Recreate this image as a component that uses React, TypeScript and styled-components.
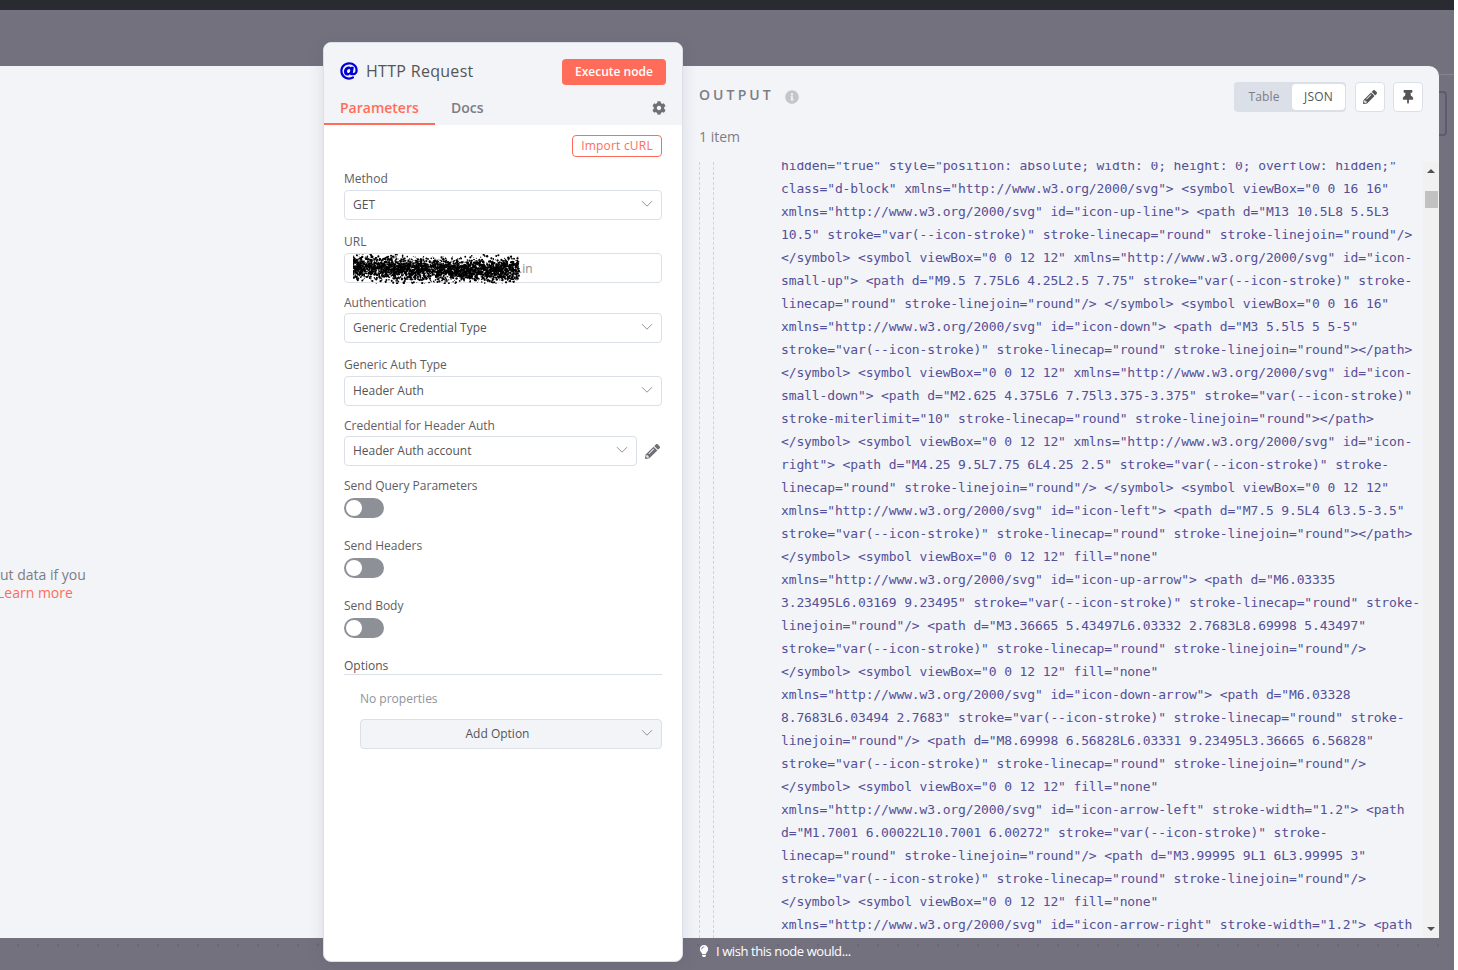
import React from 'react'
import styled, { createGlobalStyle } from 'styled-components'
import { FaAt, FaCog, FaInfoCircle, FaLightbulb, FaPencilAlt, FaThumbtack } from 'react-icons/fa'

const GlobalStyle = createGlobalStyle`
  html, body {
    margin: 0;
    background: #fff;
    font-family: 'Open Sans', 'Liberation Sans', sans-serif;
  }
`

const dots = `radial-gradient(circle at 1px 1px, #68667a 1px, transparent 1.5px)`

const Page = styled.div`
  width: 1454px;
  height: 970px;
  display: flex;
  flex-direction: column;
  overflow: hidden;
  background: #74717f;
`

const TopBar = styled.div`
  height: 10px;
  background: #2a2b30;
  flex: none;
`

const Stage = styled.div`
  flex: 1;
  min-height: 0;
  display: flex;
  padding: 32px 0 8px;
`

const LeftColumn = styled.div`
  width: 323px;
  flex: none;
  display: flex;
  flex-direction: column;
  padding-top: 24px;
`

const InputPanel = styled.div`
  height: 872px;
  flex: none;
  background: #f2f4f8;
  overflow: hidden;
  padding-top: 500px;
  box-sizing: border-box;
  font-size: 14px;
  line-height: 18px;
  color: #7d7d85;
  white-space: nowrap;
`

const LearnMore = styled.div`
  color: #ff6d5a;
  margin-left: -3px;
`

const DotStrip = styled.div<{ $x: number }>`
  flex: 1;
  background-image: ${dots};
  background-size: 20px 20px;
  background-position: ${(p) => p.$x}px 6px;
`

const NodePanel = styled.div`
  width: 360px;
  flex: none;
  box-sizing: border-box;
  display: flex;
  flex-direction: column;
  background: #fff;
  border: 1px solid #dbdfe7;
  border-radius: 8px;
  box-shadow: 0 4px 16px rgba(50, 50, 70, 0.12);
  overflow: hidden;
  position: relative;
  z-index: 2;
`

const NodeHeader = styled.div`
  background: #f2f4f8;
  height: 82px;
  flex: none;
  display: flex;
  flex-direction: column;
`

const TitleRow = styled.div`
  height: 50px;
  display: flex;
  align-items: center;
  padding: 8px 16px 0 16px;
  box-sizing: border-box;
  color: #0000d4;
`

const NodeIcon = styled(FaAt)`
  margin-top: -2px;
`

const NodeTitle = styled.div`
  font-size: 16px;
  letter-spacing: 0.3px;
  color: #555;
  margin-left: 8px;
  margin-top: -2px;
  flex: 1;
`

const ExecuteButton = styled.button`
  width: 104px;
  height: 26px;
  border: 0;
  border-radius: 4px;
  background: #ff6d5a;
  color: #fff;
  font: 600 12px 'Open Sans', sans-serif;
  padding: 0 0 2px;
`

const TabRow = styled.div`
  flex: 1;
  display: flex;
  align-items: stretch;
  padding-right: 16px;
`

const Tab = styled.div<{ $active?: boolean; $w: number }>`
  width: ${(p) => p.$w}px;
  box-sizing: border-box;
  padding: 5px 0 0 16px;
  font-size: 14px;
  font-weight: 600;
  line-height: 20px;
  color: ${(p) => (p.$active ? '#ff6d5a' : '#7d7d85')};
  border-bottom: 2px solid ${(p) => (p.$active ? '#ff6d5a' : 'transparent')};
`

const TabGear = styled.div`
  margin-left: auto;
  padding-top: 7px;
  color: #6f7077;
  font-size: 14px;
`

const NodeBody = styled.div`
  flex: 1;
  padding: 10px 20px 0;
  display: flex;
  flex-direction: column;
`

const ImportButton = styled.button`
  align-self: flex-end;
  width: 90px;
  height: 22px;
  box-sizing: border-box;
  padding: 0 0 2px;
  background: #fff;
  border: 1px solid #ff6d5a;
  border-radius: 4px;
  color: #ff6d5a;
  font: 500 12px 'Open Sans', sans-serif;
  letter-spacing: 0.2px;
`

const FieldLabel = styled.div<{ $mt: number; $gap: number }>`
  margin-top: ${(p) => p.$mt}px;
  margin-bottom: ${(p) => p.$gap}px;
  height: 15px;
  padding-top: 1px;
  font-size: 12px;
  line-height: 16px;
  color: #5d5d63;
`

const InlineRow = styled.div`
  display: flex;
  align-items: center;
`

const SelectBox = styled.div`
  flex: none;
  height: 30px;
  box-sizing: border-box;
  display: flex;
  align-items: center;
  justify-content: space-between;
  padding: 0 8px 2px 8px;
  background: #fff;
  border: 1px solid #dbdfe7;
  border-radius: 4px;
  font-size: 12px;
  color: #555;
`

const InlineSelect = styled(SelectBox)`
  flex: 1;
`

const UrlBox = styled(SelectBox)`
  position: relative;
  justify-content: flex-start;
  padding: 0 8px 0 174px;
  color: #8a8a92;
`

const Scribble = styled.svg`
  position: absolute;
  left: 8px;
  top: 0;
  filter: blur(0.6px);
`

const EditIcon = styled.div`
  width: 25px;
  flex: none;
  display: flex;
  justify-content: flex-end;
  padding-right: 2px;
  box-sizing: border-box;
  color: #6f7077;
  font-size: 15px;
`

const Toggle = styled.div`
  width: 40px;
  height: 20px;
  box-sizing: border-box;
  padding: 2px;
  border-radius: 10px;
  background: #8e9098;
`

const Knob = styled.div`
  width: 16px;
  height: 16px;
  border-radius: 50%;
  background: #fff;
`

const OptionsHeading = styled(FieldLabel)`
  font-weight: 500;
  color: #555;
`

const OptionsRule = styled.div`
  height: 1px;
  background: #dbdfe7;
`

const OptionsBody = styled.div`
  padding: 16px 0 0 16px;
  display: flex;
  flex-direction: column;
`

const NoProperties = styled.div`
  font-size: 12px;
  line-height: 16px;
  color: #909399;
  margin-bottom: 12px;
`

const AddOption = styled(SelectBox)`
  background: #f2f4f8;
  justify-content: flex-end;
`

const AddOptionText = styled.div`
  flex: 1;
  text-align: center;
  padding-right: 15px;
`

const RightColumn = styled.div`
  width: 756px;
  flex: none;
  display: flex;
  flex-direction: column;
  padding-top: 24px;
`

const OutputPanel = styled.div`
  height: 872px;
  flex: none;
  box-sizing: border-box;
  background: #f2f4f8;
  border-top-right-radius: 10px;
  display: flex;
  flex-direction: column;
  overflow: hidden;
`

const OutputHeader = styled.div`
  height: 46px;
  flex: none;
  display: flex;
  align-items: flex-end;
  padding: 0 16px;
  box-sizing: border-box;
`

const OutputTitle = styled.div`
  align-self: flex-end;
  font-size: 14px;
  font-weight: 600;
  line-height: 16px;
  letter-spacing: 3.1px;
  color: #7d7d85;
  padding-bottom: 9px;
`

const InfoIcon = styled.div`
  margin-left: 11px;
  color: #c4c5cb;
  font-size: 14px;
  line-height: 0;
  padding-bottom: 8px;
`

const HeaderActions = styled.div`
  margin-left: auto;
  display: flex;
  gap: 8px;
  align-self: flex-end;
`

const ViewSwitch = styled.div`
  width: 112px;
  height: 30px;
  box-sizing: border-box;
  padding: 2px 1px 2px 2px;
  display: flex;
  background: #dbdfe7;
  border-radius: 4px;
  margin-right: 1px;
`

const ViewOption = styled.div<{ $active?: boolean }>`
  flex: ${(p) => (p.$active ? '0 0 53px' : '1')};
  display: flex;
  align-items: center;
  justify-content: center;
  padding-bottom: 1px;
  font-size: 12px;
  letter-spacing: 0.15px;
  border-radius: 4px;
  color: ${(p) => (p.$active ? '#555' : '#7d7d85')};
  background: ${(p) => (p.$active ? '#fff' : 'transparent')};
`

const IconButton = styled.div`
  width: 30px;
  height: 30px;
  box-sizing: border-box;
  display: flex;
  align-items: center;
  justify-content: center;
  background: #fff;
  border: 1px solid #dbdfe7;
  border-radius: 4px;
  color: #555;
  font-size: 14px;
`

const ItemCount = styled.div`
  height: 50px;
  flex: none;
  box-sizing: border-box;
  padding: 16px 16px 0;
  font-size: 14px;
  line-height: 18px;
  color: #7d7d85;
`

const OutputBody = styled.div`
  flex: 1;
  min-height: 0;
  display: flex;
`

const JsonTree = styled.div`
  flex: 1;
  min-width: 0;
  padding-left: 16px;
  display: flex;
  overflow: hidden;
`

const IndentGuide = styled.div`
  width: 14px;
  flex: none;
  box-sizing: border-box;
  border-left: 1px dashed #cfd3dc;
`

const JsonLines = styled.div`
  margin: -8px 0 0 54px;
  font-family: 'DejaVu Sans Mono', 'Liberation Mono', monospace;
  font-size: 13px;
  letter-spacing: -0.13px;
  line-height: 23px;
  color: #544f96;
  white-space: pre;
`

const ScrollTrack = styled.div`
  width: 16px;
  flex: none;
  background: #f1f1f1;
  display: flex;
  flex-direction: column;
  align-items: center;
`

const ArrowUp = styled.div`
  margin-top: 7px;
  border-left: 4px solid transparent;
  border-right: 4px solid transparent;
  border-bottom: 4px solid #505050;
`

const ScrollThumb = styled.div`
  margin-top: 18px;
  width: 13px;
  height: 17px;
  background: #c1c1c1;
`

const ArrowDown = styled.div`
  margin-top: auto;
  margin-bottom: 7px;
  border-left: 4px solid transparent;
  border-right: 4px solid transparent;
  border-top: 4px solid #505050;
`

const FeedbackBar = styled(DotStrip)`
  display: flex;
  align-items: flex-start;
  padding: 4px 0 0 15px;
  color: #fff;
  font-size: 13px;
  line-height: 18px;
  letter-spacing: -0.42px;
`

const FeedbackIcon = styled.span`
  font-size: 12px;
  width: 18px;
  flex: none;
  line-height: 0;
  padding-top: 3px;
`

const Gutter = styled.div`
  flex: 1;
  padding-top: 32px;
`

const GutterRule = styled.div`
  height: 1px;
  background: #86848f;
`

const GhostButton = styled.div`
  margin-top: 16px;
  width: 8px;
  height: 45px;
  box-sizing: border-box;
  border: 2px solid #5d5b70;
  border-left: 0;
  border-radius: 0 4px 4px 0;
`

const jsonLines = [
  'hidden="true" style="position: absolute; width: 0; height: 0; overflow: hidden;"',
  'class="d-block" xmlns="http://www.w3.org/2000/svg"> <symbol viewBox="0 0 16 16"',
  'xmlns="http://www.w3.org/2000/svg" id="icon-up-line"> <path d="M13 10.5L8 5.5L3',
  '10.5" stroke="var(--icon-stroke)" stroke-linecap="round" stroke-linejoin="round"/>',
  '</symbol> <symbol viewBox="0 0 12 12" xmlns="http://www.w3.org/2000/svg" id="icon-',
  'small-up"> <path d="M9.5 7.75L6 4.25L2.5 7.75" stroke="var(--icon-stroke)" stroke-',
  'linecap="round" stroke-linejoin="round"/> </symbol> <symbol viewBox="0 0 16 16"',
  'xmlns="http://www.w3.org/2000/svg" id="icon-down"> <path d="M3 5.5l5 5 5-5"',
  'stroke="var(--icon-stroke)" stroke-linecap="round" stroke-linejoin="round"></path>',
  '</symbol> <symbol viewBox="0 0 12 12" xmlns="http://www.w3.org/2000/svg" id="icon-',
  'small-down"> <path d="M2.625 4.375L6 7.75l3.375-3.375" stroke="var(--icon-stroke)"',
  'stroke-miterlimit="10" stroke-linecap="round" stroke-linejoin="round"></path>',
  '</symbol> <symbol viewBox="0 0 12 12" xmlns="http://www.w3.org/2000/svg" id="icon-',
  'right"> <path d="M4.25 9.5L7.75 6L4.25 2.5" stroke="var(--icon-stroke)" stroke-',
  'linecap="round" stroke-linejoin="round"/> </symbol> <symbol viewBox="0 0 12 12"',
  'xmlns="http://www.w3.org/2000/svg" id="icon-left"> <path d="M7.5 9.5L4 6l3.5-3.5"',
  'stroke="var(--icon-stroke)" stroke-linecap="round" stroke-linejoin="round"></path>',
  '</symbol> <symbol viewBox="0 0 12 12" fill="none"',
  'xmlns="http://www.w3.org/2000/svg" id="icon-up-arrow"> <path d="M6.03335',
  '3.23495L6.03169 9.23495" stroke="var(--icon-stroke)" stroke-linecap="round" stroke-',
  'linejoin="round"/> <path d="M3.36665 5.43497L6.03332 2.7683L8.69998 5.43497"',
  'stroke="var(--icon-stroke)" stroke-linecap="round" stroke-linejoin="round"/>',
  '</symbol> <symbol viewBox="0 0 12 12" fill="none"',
  'xmlns="http://www.w3.org/2000/svg" id="icon-down-arrow"> <path d="M6.03328',
  '8.7683L6.03494 2.7683" stroke="var(--icon-stroke)" stroke-linecap="round" stroke-',
  'linejoin="round"/> <path d="M8.69998 6.56828L6.03331 9.23495L3.36665 6.56828"',
  'stroke="var(--icon-stroke)" stroke-linecap="round" stroke-linejoin="round"/>',
  '</symbol> <symbol viewBox="0 0 12 12" fill="none"',
  'xmlns="http://www.w3.org/2000/svg" id="icon-arrow-left" stroke-width="1.2"> <path',
  'd="M1.7001 6.00022L10.7001 6.00272" stroke="var(--icon-stroke)" stroke-',
  'linecap="round" stroke-linejoin="round"/> <path d="M3.99995 9L1 6L3.99995 3"',
  'stroke="var(--icon-stroke)" stroke-linecap="round" stroke-linejoin="round"/>',
  '</symbol> <symbol viewBox="0 0 12 12" fill="none"',
  'xmlns="http://www.w3.org/2000/svg" id="icon-arrow-right" stroke-width="1.2"> <path',
]

// seeded so the scribble comes out the same on every render
const scribbleDots = (() => {
  let seed = 7
  const rnd = () => {
    seed = (seed * 16807) % 2147483647
    return seed / 2147483647
  }
  return Array.from({ length: 3200 }, () => {
    const x = rnd() * 166
    // the band sits a little higher at the left end than in the middle
    const mid = 13 + Math.min(x, 166 - x * 0.6) * 0.035
    const y = mid + (rnd() + rnd() + rnd() - 1.5) * 11
    return { x, y, r: 0.4 + rnd() * 0.8 }
  })
})()

const Chevron = () => (
  <svg width='12' height='8' viewBox='0 0 12 8' fill='none'>
    <path d='M1 1.2l5 5 5-5' stroke='#909399' strokeWidth='1' />
  </svg>
)

const Switch = () => (
  <Toggle>
    <Knob />
  </Toggle>
)

export default function App() {
  return (
    <Page>
      <GlobalStyle />
      <TopBar />
      <Stage>
        <LeftColumn>
          <InputPanel>
            ut data if you
            <LearnMore>Learn more</LearnMore>
          </InputPanel>
          <DotStrip $x={17} />
        </LeftColumn>

        <NodePanel>
          <NodeHeader>
            <TitleRow>
              <NodeIcon size={18} />
              <NodeTitle>HTTP Request</NodeTitle>
              <ExecuteButton>Execute node</ExecuteButton>
            </TitleRow>
            <TabRow>
              <Tab $active $w={111}>Parameters</Tab>
              <Tab $w={60}>Docs</Tab>
              <TabGear>
                <FaCog />
              </TabGear>
            </TabRow>
          </NodeHeader>
          <NodeBody>
            <ImportButton>Import cURL</ImportButton>

            <FieldLabel $mt={13} $gap={4}>Method</FieldLabel>
            <SelectBox>
              GET
              <Chevron />
            </SelectBox>

            <FieldLabel $mt={13} $gap={4}>URL</FieldLabel>
            <UrlBox>
              <Scribble width='168' height='30' viewBox='0 0 168 30'>
                {scribbleDots.map((d, i) => (
                  <circle key={i} cx={d.x} cy={d.y} r={d.r} fill='#000' />
                ))}
              </Scribble>
              .in
            </UrlBox>

            <FieldLabel $mt={11} $gap={3}>Authentication</FieldLabel>
            <SelectBox>
              Generic Credential Type
              <Chevron />
            </SelectBox>

            <FieldLabel $mt={13} $gap={4}>Generic Auth Type</FieldLabel>
            <SelectBox>
              Header Auth
              <Chevron />
            </SelectBox>

            <FieldLabel $mt={11} $gap={3}>Credential for Header Auth</FieldLabel>
            <InlineRow>
              <InlineSelect>
                Header Auth account
                <Chevron />
              </InlineSelect>
              <EditIcon>
                <FaPencilAlt />
              </EditIcon>
            </InlineRow>

            <FieldLabel $mt={11} $gap={5}>Send Query Parameters</FieldLabel>
            <Switch />

            <FieldLabel $mt={19} $gap={5}>Send Headers</FieldLabel>
            <Switch />

            <FieldLabel $mt={19} $gap={5}>Send Body</FieldLabel>
            <Switch />

            <OptionsHeading $mt={19} $gap={1}>Options</OptionsHeading>
            <OptionsRule />
            <OptionsBody>
              <NoProperties>No properties</NoProperties>
              <AddOption>
                <AddOptionText>Add Option</AddOptionText>
                <Chevron />
              </AddOption>
            </OptionsBody>
          </NodeBody>
        </NodePanel>

        <RightColumn>
          <OutputPanel>
            <OutputHeader>
              <OutputTitle>OUTPUT</OutputTitle>
              <InfoIcon>
                <FaInfoCircle />
              </InfoIcon>
              <HeaderActions>
                <ViewSwitch>
                  <ViewOption>Table</ViewOption>
                  <ViewOption $active>JSON</ViewOption>
                </ViewSwitch>
                <IconButton>
                  <FaPencilAlt />
                </IconButton>
                <IconButton>
                  <FaThumbtack />
                </IconButton>
              </HeaderActions>
            </OutputHeader>
            <ItemCount>1 item</ItemCount>
            <OutputBody>
              <JsonTree>
                <IndentGuide />
                <IndentGuide />
                <JsonLines>
                  {jsonLines.map((line, i) => (
                    <div key={i}>{line}</div>
                  ))}
                </JsonLines>
              </JsonTree>
              <ScrollTrack>
                <ArrowUp />
                <ScrollThumb />
                <ArrowDown />
              </ScrollTrack>
            </OutputBody>
          </OutputPanel>
          <FeedbackBar $x={14}>
            <FeedbackIcon>
              <FaLightbulb />
            </FeedbackIcon>
            I wish this node would...
          </FeedbackBar>
        </RightColumn>

        <Gutter>
          <GutterRule />
          <GhostButton />
        </Gutter>
      </Stage>
    </Page>
  )
}
